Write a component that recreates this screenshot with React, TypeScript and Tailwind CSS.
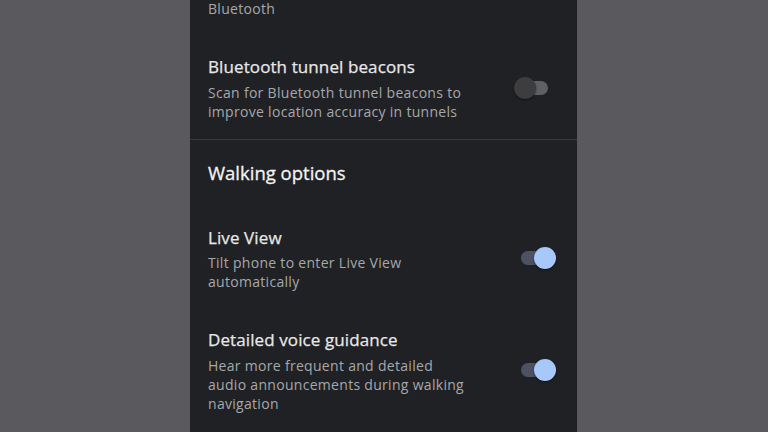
import React from "react";

function Toggle({ on }: { on: boolean }) {
  return (
    <div className="relative w-[42px] h-[22px] shrink-0">
      <div
        className={
          on
            ? "absolute left-[7px] top-[4px] w-[27px] h-[14px] rounded-full bg-[#4c5262]"
            : "absolute left-[7px] top-[4px] w-[27px] h-[14px] rounded-full bg-[#5f6064]"
        }
      />
      <div
        className={
          on
            ? "absolute left-[20px] top-0 w-[22px] h-[22px] rounded-full bg-[#a8c7fa] shadow-[0_1px_2px_rgba(0,0,0,0.5)]"
            : "absolute left-0 top-0 w-[22px] h-[22px] rounded-full bg-[#3d3d40] shadow-[0_1px_2px_rgba(0,0,0,0.5)]"
        }
      />
    </div>
  );
}

function Row({
  title,
  lines,
  on,
}: {
  title: string;
  lines: string[];
  on: boolean;
}) {
  return (
    <div className="flex items-center pl-[18px] pr-[21px] py-[18.5px]">
      <div className="flex-1 min-w-0">
        <div className="text-[17px] leading-6 tracking-[0.1px] text-[#e8e8e8] [-webkit-text-stroke:0.25px]">{title}</div>
        <div className="mt-[3.5px] text-[14px] leading-[19px] tracking-[0.3px] text-[#a6a8ab]">
          {lines.map((l, i) => (
            <div key={i} className="whitespace-nowrap">{l}</div>
          ))}
        </div>
      </div>
      <Toggle on={on} />
    </div>
  );
}

export default function App() {
  return (
    <div
      className="w-[768px] h-[432px] overflow-hidden bg-[#5a595d] flex"
      style={{ fontFamily: "'Open Sans', Roboto, sans-serif" }}
    >
      <div className="ml-[190px] w-[387px] h-full bg-[#202124] overflow-hidden flex flex-col">
        <div className="mt-[-1px] pl-[18px] pb-[18.5px] text-[14px] leading-[19px] tracking-[0.3px] text-[#a6a8ab]">
          Bluetooth
        </div>
        <Row
          title="Bluetooth tunnel beacons"
          lines={["Scan for Bluetooth tunnel beacons to", "improve location accuracy in tunnels"]}
          on={false}
        />
        <div className="h-px bg-[#3a3b3e]" />
        <div className="pl-[18px] pt-[21px] pb-[22px] text-[18.5px] leading-6 text-[#f3f3f3] [-webkit-text-stroke:0.3px]">
          Walking options
        </div>
        <Row
          title="Live View"
          lines={["Tilt phone to enter Live View", "automatically"]}
          on={true}
        />
        <Row
          title="Detailed voice guidance"
          lines={[
            "Hear more frequent and detailed",
            "audio announcements during walking",
            "navigation",
          ]}
          on={true}
        />
      </div>
    </div>
  );
}
